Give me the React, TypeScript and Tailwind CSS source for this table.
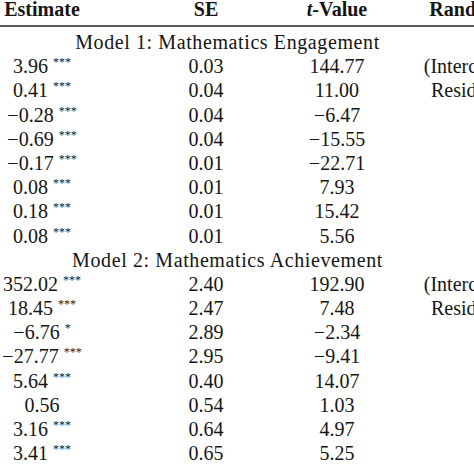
import React from "react";

type Row = { est: string; stars?: string; se: string; t: string; rnd?: string };

const model1: Row[] = [
  { est: "3.96", stars: "***", se: "0.03", t: "144.77", rnd: "(Intercept)" },
  { est: "0.41", stars: "***", se: "0.04", t: "11.00", rnd: "Residual" },
  { est: "\u22120.28", stars: "***", se: "0.04", t: "\u22126.47" },
  { est: "\u22120.69", stars: "***", se: "0.04", t: "\u221215.55" },
  { est: "\u22120.17", stars: "***", se: "0.01", t: "\u221222.71" },
  { est: "0.08", stars: "***", se: "0.01", t: "7.93" },
  { est: "0.18", stars: "***", se: "0.01", t: "15.42" },
  { est: "0.08", stars: "***", se: "0.01", t: "5.56" },
];

const model2: Row[] = [
  { est: "352.02", stars: "***", se: "2.40", t: "192.90", rnd: "(Intercept)" },
  { est: "18.45", stars: "***", se: "2.47", t: "7.48", rnd: "Residual" },
  { est: "\u22126.76", stars: "*", se: "2.89", t: "\u22122.34" },
  { est: "\u221227.77", stars: "***", se: "2.95", t: "\u22129.41" },
  { est: "5.64", stars: "***", se: "0.40", t: "14.07" },
  { est: "0.56", se: "0.54", t: "1.03" },
  { est: "3.16", stars: "***", se: "0.64", t: "4.97" },
  { est: "3.41", stars: "***", se: "0.65", t: "5.25" },
];

const DataRow = ({ row }: { row: Row }) => (
  <div className="flex leading-[24.2px] h-[24.2px] whitespace-nowrap">
    <div className="w-[84px] shrink-0 text-center">
      {row.est}
      {row.stars && (
        <span className="relative -top-[7px] ml-[5px] text-[12px]">{row.stars}</span>
      )}
    </div>
    <div className="ml-[60px] w-[124px] shrink-0 text-center">{row.se}</div>
    <div className="w-[138px] shrink-0 text-center">{row.t}</div>
    <div className="w-[120px] shrink-0 text-center">{row.rnd}</div>
  </div>
);

const ModelRow = ({ title }: { title: string }) => (
  <div className="w-[455px] text-center leading-[24.2px] h-[24.2px] tracking-[0.6px] whitespace-nowrap">
    {title}
  </div>
);

export default function App() {
  return (
    <div
      className="w-[474px] h-[474px] overflow-hidden bg-white text-[20px] text-[#151515]"
      style={{ fontFamily: '"Liberation Serif", "Times New Roman", serif' }}
    >
      {/* HEADER */}
      <div className="flex font-bold leading-[19px] h-[25px] whitespace-nowrap border-b-2 border-[#5a5a5a] box-content">
        <div className="w-[84px] shrink-0 text-center">Estimate</div>
        <div className="ml-[60px] w-[124px] shrink-0 text-center">SE</div>
        <div className="w-[138px] shrink-0 text-center">
          <span className="italic">t</span>-Value
        </div>
        <div className="w-[120px] shrink-0 text-center">Random</div>
      </div>

      <div className="pt-[3px]">
        <ModelRow title="Model 1: Mathematics Engagement" />
        {model1.map((r, i) => (
          <DataRow key={"a" + i} row={r} />
        ))}
        <ModelRow title="Model 2: Mathematics Achievement" />
        {model2.map((r, i) => (
          <DataRow key={"b" + i} row={r} />
        ))}
      </div>
    </div>
  );
}
